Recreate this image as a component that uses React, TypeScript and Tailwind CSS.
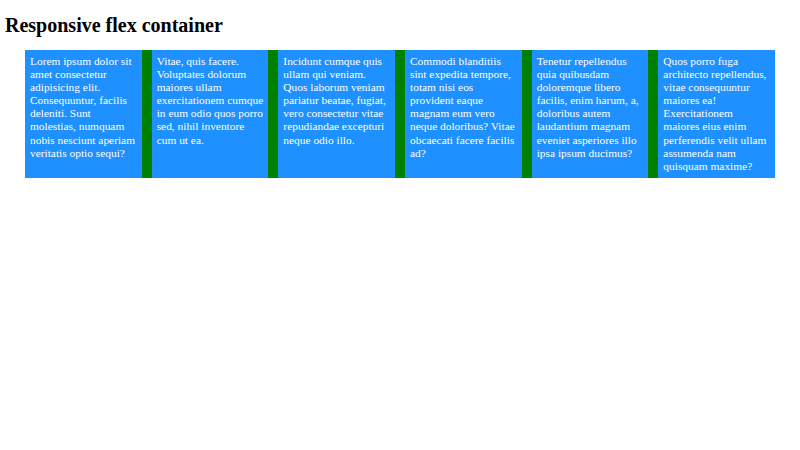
import React from "react";

const items = [
  "Lorem ipsum dolor sit amet consectetur adipisicing elit. Consequuntur, facilis deleniti. Sunt molestias, numquam nobis nesciunt aperiam veritatis optio sequi?",
  "Vitae, quis facere. Voluptates dolorum maiores ullam exercitationem cumque in eum odio quos porro sed, nihil inventore cum ut ea.",
  "Incidunt cumque quis ullam qui veniam. Quos laborum veniam pariatur beatae, fugiat, vero consectetur vitae repudiandae excepturi neque odio illo.",
  "Commodi blanditiis sint expedita tempore, totam nisi eos provident eaque magnam eum vero neque doloribus? Vitae obcaecati facere facilis ad?",
  "Tenetur repellendus quia quibusdam doloremque libero facilis, enim harum, a, doloribus autem laudantium magnam eveniet asperiores illo ipsa ipsum ducimus?",
  "Quos porro fuga architecto repellendus, vitae consequuntur maiores ea! Exercitationem maiores eius enim perferendis velit ullam assumenda nam quisquam maxime?",
];

export default function App() {
  return (
    <div className="w-[800px] h-[450px] bg-white px-[5px] font-['Liberation_Serif',serif] text-black">
      <h1 className="text-[20px] font-bold leading-[24px] pt-[13px] pb-[13px]">Responsive flex container</h1>
      <div className="mx-[20px] flex justify-between gap-[10px] bg-[#008000]">
        {items.map((t, i) => (
          <div key={i} className="flex-1 bg-[#1e90ff] text-white text-[11.4px] leading-[13.1px] p-[5px]">
            {t}
          </div>
        ))}
      </div>
    </div>
  );
}
